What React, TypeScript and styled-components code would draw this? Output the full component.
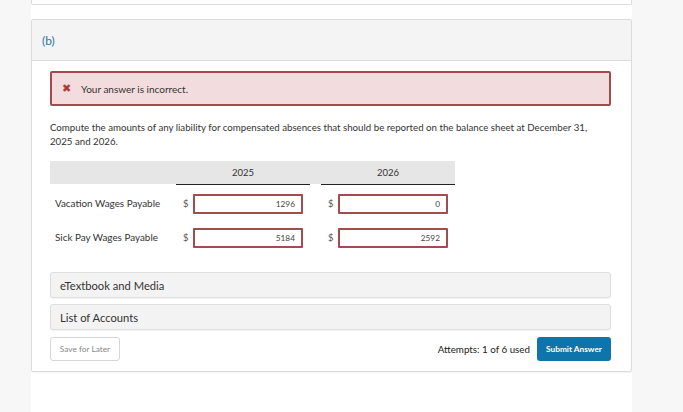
import React from "react";
import styled, { createGlobalStyle } from "styled-components";

const Global = createGlobalStyle`
  html, body { margin: 0; padding: 0; }
  body {
    background: #f7f7f7;
    font-family: Lato, "Open Sans", Arial, sans-serif;
    color: #333;
  }
`;

const Column = styled.div`
  margin-left: 31px;
  width: 601px;
  min-height: 412px;
  background: #fff;
  box-sizing: border-box;
`;

const PrevPanel = styled.div`
  height: 4px;
  border: 1px solid #dcdcdc;
  border-top: none;
  border-radius: 0 0 2px 2px;
`;

const Panel = styled.section`
  margin-top: 14px;
  border: 1px solid #dcdcdc;
  border-radius: 2px;
  box-shadow: 0 1px 1px rgba(0, 0, 0, 0.04);
`;

const PanelHeader = styled.div`
  height: 40px;
  background: #f4f4f4;
  border-bottom: 1px solid #dcdcdc;
  display: flex;
  align-items: center;
  padding-left: 10px;
  font-size: 12px;
  color: #2f73a8;
`;

const PanelBody = styled.div`
  padding: 10px 20px 10px 18px;
`;

const Alert = styled.div`
  height: 35px;
  box-sizing: border-box;
  border: 2px solid #a3494f;
  border-radius: 2px;
  background: #f3dcde;
  display: flex;
  align-items: center;
  padding-left: 10px;
  font-size: 10px;
  color: #333;
`;

const AlertIcon = styled.span`
  color: #b2373a;
  font-size: 11px;
  font-weight: 700;
  width: 10px;
  margin-right: 9px;
  font-family: "DejaVu Sans", sans-serif;
`;

const Instructions = styled.p`
  margin: 14px 0 0 0;
  font-size: 9.7px;
  line-height: 14px;
  color: #333;
  padding-right: 10px;
`;

const Grid = styled.div`
  margin-top: 13px;
  display: grid;
  grid-template-columns: 126px 134px 11px 134px;
  width: 405px;
`;

const HeadCell = styled.div<{ $line?: boolean }>`
  height: 23px;
  background: #e6e6e6;
  display: flex;
  align-items: center;
  justify-content: center;
  font-size: 9.5px;
  color: #333;
  border-bottom: 1px solid ${(p) => (p.$line ? "#222" : "transparent")};
  background-clip: padding-box;
`;

const HeadLineGap = styled.div`
  height: 24px;
  background: linear-gradient(#e6e6e6 0 23px, #fff 23px);
`;

const Label = styled.div`
  height: 34px;
  display: flex;
  align-items: center;
  padding-left: 5px;
  font-size: 9.9px;
  color: #333;
  padding-top: 2px;
  box-sizing: border-box;
`;

const Group = styled.div`
  height: 34px;
  display: flex;
  align-items: center;
  padding-left: 7px;
  box-sizing: border-box;
  padding-top: 3px;
`;

const Dollar = styled.span`
  width: 10px;
  font-size: 9.5px;
  color: #555;
`;

const Input = styled.div`
  width: 110px;
  height: 20px;
  box-sizing: border-box;
  border: 2px solid #a34c4f;
  border-radius: 1px;
  background: #fff;
  display: flex;
  align-items: center;
  justify-content: flex-end;
  padding-right: 6px;
  font-size: 8.3px;
  color: #444;
`;

const Spacer = styled.div``;

const Accordions = styled.div`
  margin-top: 19px;
  display: flex;
  flex-direction: column;
  gap: 6px;
`;

const AccordionItem = styled.div`
  height: 26px;
  box-sizing: border-box;
  background: #f3f3f3;
  border: 1px solid #dedede;
  border-radius: 3px;
  display: flex;
  align-items: center;
  padding-left: 9px;
  font-size: 11.2px;
  color: #333;
  box-shadow: 0 1px 1px rgba(0, 0, 0, 0.05);
`;

const Footer = styled.div`
  margin-top: 7px;
  display: flex;
  align-items: center;
`;

const SaveButton = styled.button`
  width: 70px;
  height: 24px;
  background: #fff;
  border: 1px solid #d6d6d6;
  border-radius: 3px;
  font-family: inherit;
  font-size: 8.3px;
  color: #888;
  padding: 0;
`;

const Attempts = styled.span`
  margin-left: auto;
  margin-right: 7px;
  font-size: 9.8px;
  color: #222;
`;

const SubmitButton = styled.button`
  width: 74px;
  height: 24px;
  background: #0f74a9;
  border: none;
  border-radius: 3px;
  font-family: inherit;
  font-size: 8.3px;
  font-weight: 700;
  color: #fff;
  padding: 0;
`;

const rows = [
  { label: "Vacation Wages Payable", a: "1296", b: "0" },
  { label: "Sick Pay Wages Payable", a: "5184", b: "2592" },
];

export default function App() {
  return (
    <>
      <Global />
      <Column>
        <PrevPanel />
        <Panel>
          <PanelHeader>(b)</PanelHeader>
          <PanelBody>
            <Alert>
              <AlertIcon>✖</AlertIcon>
              Your answer is incorrect.
            </Alert>
            <Instructions>
              Compute the amounts of any liability for compensated absences that should be reported on the
              balance sheet at December 31, 2025 and 2026.
            </Instructions>
            <Grid>
              <HeadLineGap />
              <HeadCell $line>2025</HeadCell>
              <HeadLineGap />
              <HeadCell $line>2026</HeadCell>
              {rows.map((r) => (
                <React.Fragment key={r.label}>
                  <Label>{r.label}</Label>
                  <Group>
                    <Dollar>$</Dollar>
                    <Input>{r.a}</Input>
                  </Group>
                  <Spacer />
                  <Group>
                    <Dollar>$</Dollar>
                    <Input>{r.b}</Input>
                  </Group>
                </React.Fragment>
              ))}
            </Grid>
            <Accordions>
              <AccordionItem>eTextbook and Media</AccordionItem>
              <AccordionItem>List of Accounts</AccordionItem>
            </Accordions>
            <Footer>
              <SaveButton>Save for Later</SaveButton>
              <Attempts>Attempts: 1 of 6 used</Attempts>
              <SubmitButton>Submit Answer</SubmitButton>
            </Footer>
          </PanelBody>
        </Panel>
      </Column>
    </>
  );
}
